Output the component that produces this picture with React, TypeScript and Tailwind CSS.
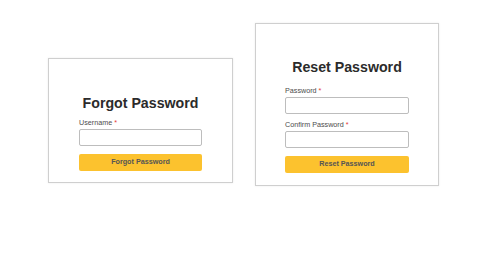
import React from 'react';

const Field: React.FC<{ label: string; className?: string }> = ({ label, className }) => (
    <div className={className}>
        <label className="block text-[7.2px] leading-[8px] text-[#4d4d4d]">
            {label} <span className="text-[#e53935]">*</span>
        </label>
        <input className="mt-[2px] block w-full h-[17px] border border-[#bdbdbd] rounded-[2px] bg-white outline-none" />
    </div>
);

const SubmitButton: React.FC<{ label: string; className?: string }> = ({ label, className }) => (
    <button className={`block w-full h-[17px] rounded-[2px] bg-[#fcc22e] text-[7.2px] font-bold text-[#555] ${className ?? ''}`}>
        {label}
    </button>
);

export default function App() {
    return (
        <div className="w-[500px] h-[276px] bg-white font-['Liberation_Sans',Arial,sans-serif] flex items-start pl-[48px] gap-[22px]">
            <div className="mt-[58px] w-[185px] h-[125px] border border-[#cfcfcf] shadow-[0_0_2px_rgba(0,0,0,0.08)] px-[30px] pt-[36px]">
                <h1 className="text-[14.2px] leading-[16px] font-bold text-[#2b2b2b] text-center">Forgot Password</h1>
                <Field label="Username" className="mt-[8px]" />
                <SubmitButton label="Forgot Password" className="mt-[8px]" />
            </div>
            <div className="mt-[23px] w-[184px] h-[163px] border border-[#cfcfcf] shadow-[0_0_2px_rgba(0,0,0,0.08)] px-[29px] pt-[35px]">
                <h1 className="text-[14.2px] leading-[16px] font-bold text-[#2b2b2b] text-center">Reset Password</h1>
                <Field label="Password" className="mt-[12px]" />
                <Field label="Confirm Password" className="mt-[7px]" />
                <SubmitButton label="Reset Password" className="mt-[8px]" />
            </div>
        </div>
    );
}
